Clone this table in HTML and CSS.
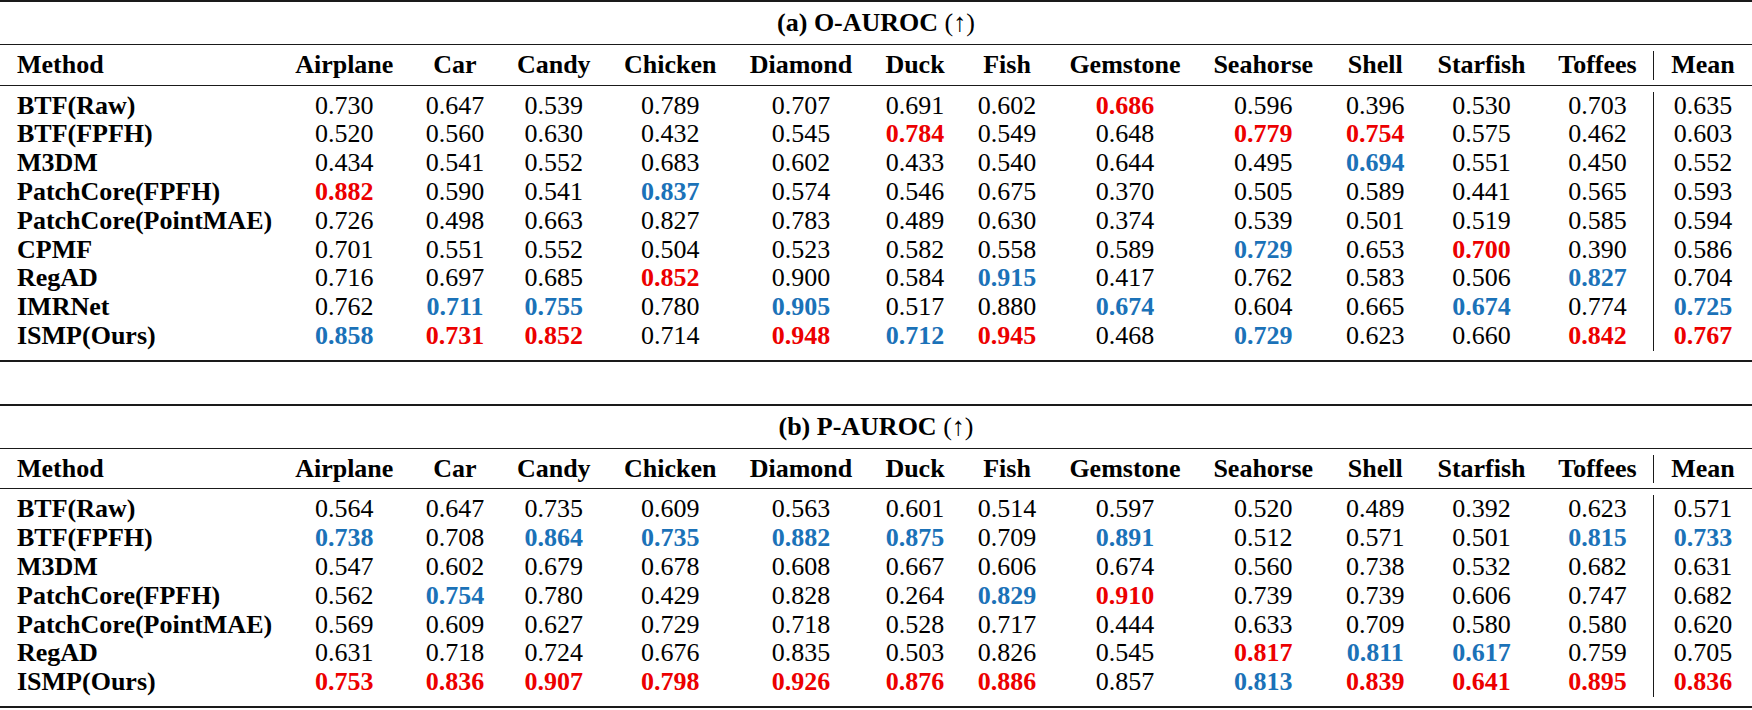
FILE: index.html
```html
<!DOCTYPE html>
<html lang="en">
<head>
<meta charset="utf-8">
<title>O-AUROC and P-AUROC results</title>
<link rel="stylesheet" href="styles.css">
</head>
<body>
<section class="tbl tbl-a">
  <div class="title">(a) O-AUROC <span class="arrow">(↑)</span></div>
  <div class="row head">
    <div class="c m">Method</div><div class="c">Airplane</div><div class="c">Car</div><div class="c">Candy</div><div class="c">Chicken</div><div class="c">Diamond</div><div class="c">Duck</div><div class="c">Fish</div><div class="c">Gemstone</div><div class="c">Seahorse</div><div class="c">Shell</div><div class="c">Starfish</div><div class="c">Toffees</div><div class="c mean">Mean</div>
  </div>
  <div class="body">
    <div class="row"><div class="c m">BTF(Raw)</div><div class="c">0.730</div><div class="c">0.647</div><div class="c">0.539</div><div class="c">0.789</div><div class="c">0.707</div><div class="c">0.691</div><div class="c">0.602</div><div class="c r">0.686</div><div class="c">0.596</div><div class="c">0.396</div><div class="c">0.530</div><div class="c">0.703</div><div class="c mean">0.635</div></div>
    <div class="row"><div class="c m">BTF(FPFH)</div><div class="c">0.520</div><div class="c">0.560</div><div class="c">0.630</div><div class="c">0.432</div><div class="c">0.545</div><div class="c r">0.784</div><div class="c">0.549</div><div class="c">0.648</div><div class="c r">0.779</div><div class="c r">0.754</div><div class="c">0.575</div><div class="c">0.462</div><div class="c mean">0.603</div></div>
    <div class="row"><div class="c m">M3DM</div><div class="c">0.434</div><div class="c">0.541</div><div class="c">0.552</div><div class="c">0.683</div><div class="c">0.602</div><div class="c">0.433</div><div class="c">0.540</div><div class="c">0.644</div><div class="c">0.495</div><div class="c b">0.694</div><div class="c">0.551</div><div class="c">0.450</div><div class="c mean">0.552</div></div>
    <div class="row"><div class="c m">PatchCore(FPFH)</div><div class="c r">0.882</div><div class="c">0.590</div><div class="c">0.541</div><div class="c b">0.837</div><div class="c">0.574</div><div class="c">0.546</div><div class="c">0.675</div><div class="c">0.370</div><div class="c">0.505</div><div class="c">0.589</div><div class="c">0.441</div><div class="c">0.565</div><div class="c mean">0.593</div></div>
    <div class="row"><div class="c m">PatchCore(PointMAE)</div><div class="c">0.726</div><div class="c">0.498</div><div class="c">0.663</div><div class="c">0.827</div><div class="c">0.783</div><div class="c">0.489</div><div class="c">0.630</div><div class="c">0.374</div><div class="c">0.539</div><div class="c">0.501</div><div class="c">0.519</div><div class="c">0.585</div><div class="c mean">0.594</div></div>
    <div class="row"><div class="c m">CPMF</div><div class="c">0.701</div><div class="c">0.551</div><div class="c">0.552</div><div class="c">0.504</div><div class="c">0.523</div><div class="c">0.582</div><div class="c">0.558</div><div class="c">0.589</div><div class="c b">0.729</div><div class="c">0.653</div><div class="c r">0.700</div><div class="c">0.390</div><div class="c mean">0.586</div></div>
    <div class="row"><div class="c m">RegAD</div><div class="c">0.716</div><div class="c">0.697</div><div class="c">0.685</div><div class="c r">0.852</div><div class="c">0.900</div><div class="c">0.584</div><div class="c b">0.915</div><div class="c">0.417</div><div class="c">0.762</div><div class="c">0.583</div><div class="c">0.506</div><div class="c b">0.827</div><div class="c mean">0.704</div></div>
    <div class="row"><div class="c m">IMRNet</div><div class="c">0.762</div><div class="c b">0.711</div><div class="c b">0.755</div><div class="c">0.780</div><div class="c b">0.905</div><div class="c">0.517</div><div class="c">0.880</div><div class="c b">0.674</div><div class="c">0.604</div><div class="c">0.665</div><div class="c b">0.674</div><div class="c">0.774</div><div class="c mean b">0.725</div></div>
    <div class="row"><div class="c m">ISMP(Ours)</div><div class="c b">0.858</div><div class="c r">0.731</div><div class="c r">0.852</div><div class="c">0.714</div><div class="c r">0.948</div><div class="c b">0.712</div><div class="c r">0.945</div><div class="c">0.468</div><div class="c b">0.729</div><div class="c">0.623</div><div class="c">0.660</div><div class="c r">0.842</div><div class="c mean r">0.767</div></div>
  </div>
</section>

<section class="tbl tbl-b">
  <div class="title">(b) P-AUROC <span class="arrow">(↑)</span></div>
  <div class="row head">
    <div class="c m">Method</div><div class="c">Airplane</div><div class="c">Car</div><div class="c">Candy</div><div class="c">Chicken</div><div class="c">Diamond</div><div class="c">Duck</div><div class="c">Fish</div><div class="c">Gemstone</div><div class="c">Seahorse</div><div class="c">Shell</div><div class="c">Starfish</div><div class="c">Toffees</div><div class="c mean">Mean</div>
  </div>
  <div class="body">
    <div class="row"><div class="c m">BTF(Raw)</div><div class="c">0.564</div><div class="c">0.647</div><div class="c">0.735</div><div class="c">0.609</div><div class="c">0.563</div><div class="c">0.601</div><div class="c">0.514</div><div class="c">0.597</div><div class="c">0.520</div><div class="c">0.489</div><div class="c">0.392</div><div class="c">0.623</div><div class="c mean">0.571</div></div>
    <div class="row"><div class="c m">BTF(FPFH)</div><div class="c b">0.738</div><div class="c">0.708</div><div class="c b">0.864</div><div class="c b">0.735</div><div class="c b">0.882</div><div class="c b">0.875</div><div class="c">0.709</div><div class="c b">0.891</div><div class="c">0.512</div><div class="c">0.571</div><div class="c">0.501</div><div class="c b">0.815</div><div class="c mean b">0.733</div></div>
    <div class="row"><div class="c m">M3DM</div><div class="c">0.547</div><div class="c">0.602</div><div class="c">0.679</div><div class="c">0.678</div><div class="c">0.608</div><div class="c">0.667</div><div class="c">0.606</div><div class="c">0.674</div><div class="c">0.560</div><div class="c">0.738</div><div class="c">0.532</div><div class="c">0.682</div><div class="c mean">0.631</div></div>
    <div class="row"><div class="c m">PatchCore(FPFH)</div><div class="c">0.562</div><div class="c b">0.754</div><div class="c">0.780</div><div class="c">0.429</div><div class="c">0.828</div><div class="c">0.264</div><div class="c b">0.829</div><div class="c r">0.910</div><div class="c">0.739</div><div class="c">0.739</div><div class="c">0.606</div><div class="c">0.747</div><div class="c mean">0.682</div></div>
    <div class="row"><div class="c m">PatchCore(PointMAE)</div><div class="c">0.569</div><div class="c">0.609</div><div class="c">0.627</div><div class="c">0.729</div><div class="c">0.718</div><div class="c">0.528</div><div class="c">0.717</div><div class="c">0.444</div><div class="c">0.633</div><div class="c">0.709</div><div class="c">0.580</div><div class="c">0.580</div><div class="c mean">0.620</div></div>
    <div class="row"><div class="c m">RegAD</div><div class="c">0.631</div><div class="c">0.718</div><div class="c">0.724</div><div class="c">0.676</div><div class="c">0.835</div><div class="c">0.503</div><div class="c">0.826</div><div class="c">0.545</div><div class="c r">0.817</div><div class="c b">0.811</div><div class="c b">0.617</div><div class="c">0.759</div><div class="c mean">0.705</div></div>
    <div class="row"><div class="c m">ISMP(Ours)</div><div class="c r">0.753</div><div class="c r">0.836</div><div class="c r">0.907</div><div class="c r">0.798</div><div class="c r">0.926</div><div class="c r">0.876</div><div class="c r">0.886</div><div class="c">0.857</div><div class="c b">0.813</div><div class="c r">0.839</div><div class="c r">0.641</div><div class="c r">0.895</div><div class="c mean r">0.836</div></div>
  </div>
</section>
</body>
</html>
```

FILE: styles.css
```css
html, body {
  margin: 0;
  padding: 0;
  background: #ffffff;
}

body {
  width: 1752px;
  font-family: "Liberation Serif", "Times New Roman", serif;
  font-size: 26px;
  line-height: 28.8px;
  color: #000;
}

.tbl {
  border-top: 2px solid #1a1a1a;
  border-bottom: 2px solid #1a1a1a;
}

.tbl-b {
  margin-top: 42px;
}

.title {
  text-align: center;
  font-weight: bold;
  padding: 7px 0 6px;
  border-bottom: 1px solid #1a1a1a;
}

.title .arrow {
  font-weight: normal;
}

.row {
  display: grid;
  grid-template-columns: 278.5px 131.5px 90px 107.5px 125.5px 136px 92px 92px 144px 132.5px 91.5px 121px 111px 99px;
}

.head {
  font-weight: bold;
  padding: 6px 0 5px;
  border-bottom: 1px solid #1a1a1a;
}

.body {
  padding: 6px 0 9px;
}

.c {
  text-align: center;
  white-space: nowrap;
}

.c.m {
  text-align: left;
  padding-left: 17px;
  font-weight: bold;
}

.c.mean {
  border-left: 1px solid #1a1a1a;
}

.r {
  color: #ec0000;
  font-weight: bold;
}

.b {
  color: #1b72b8;
  font-weight: bold;
}
```
